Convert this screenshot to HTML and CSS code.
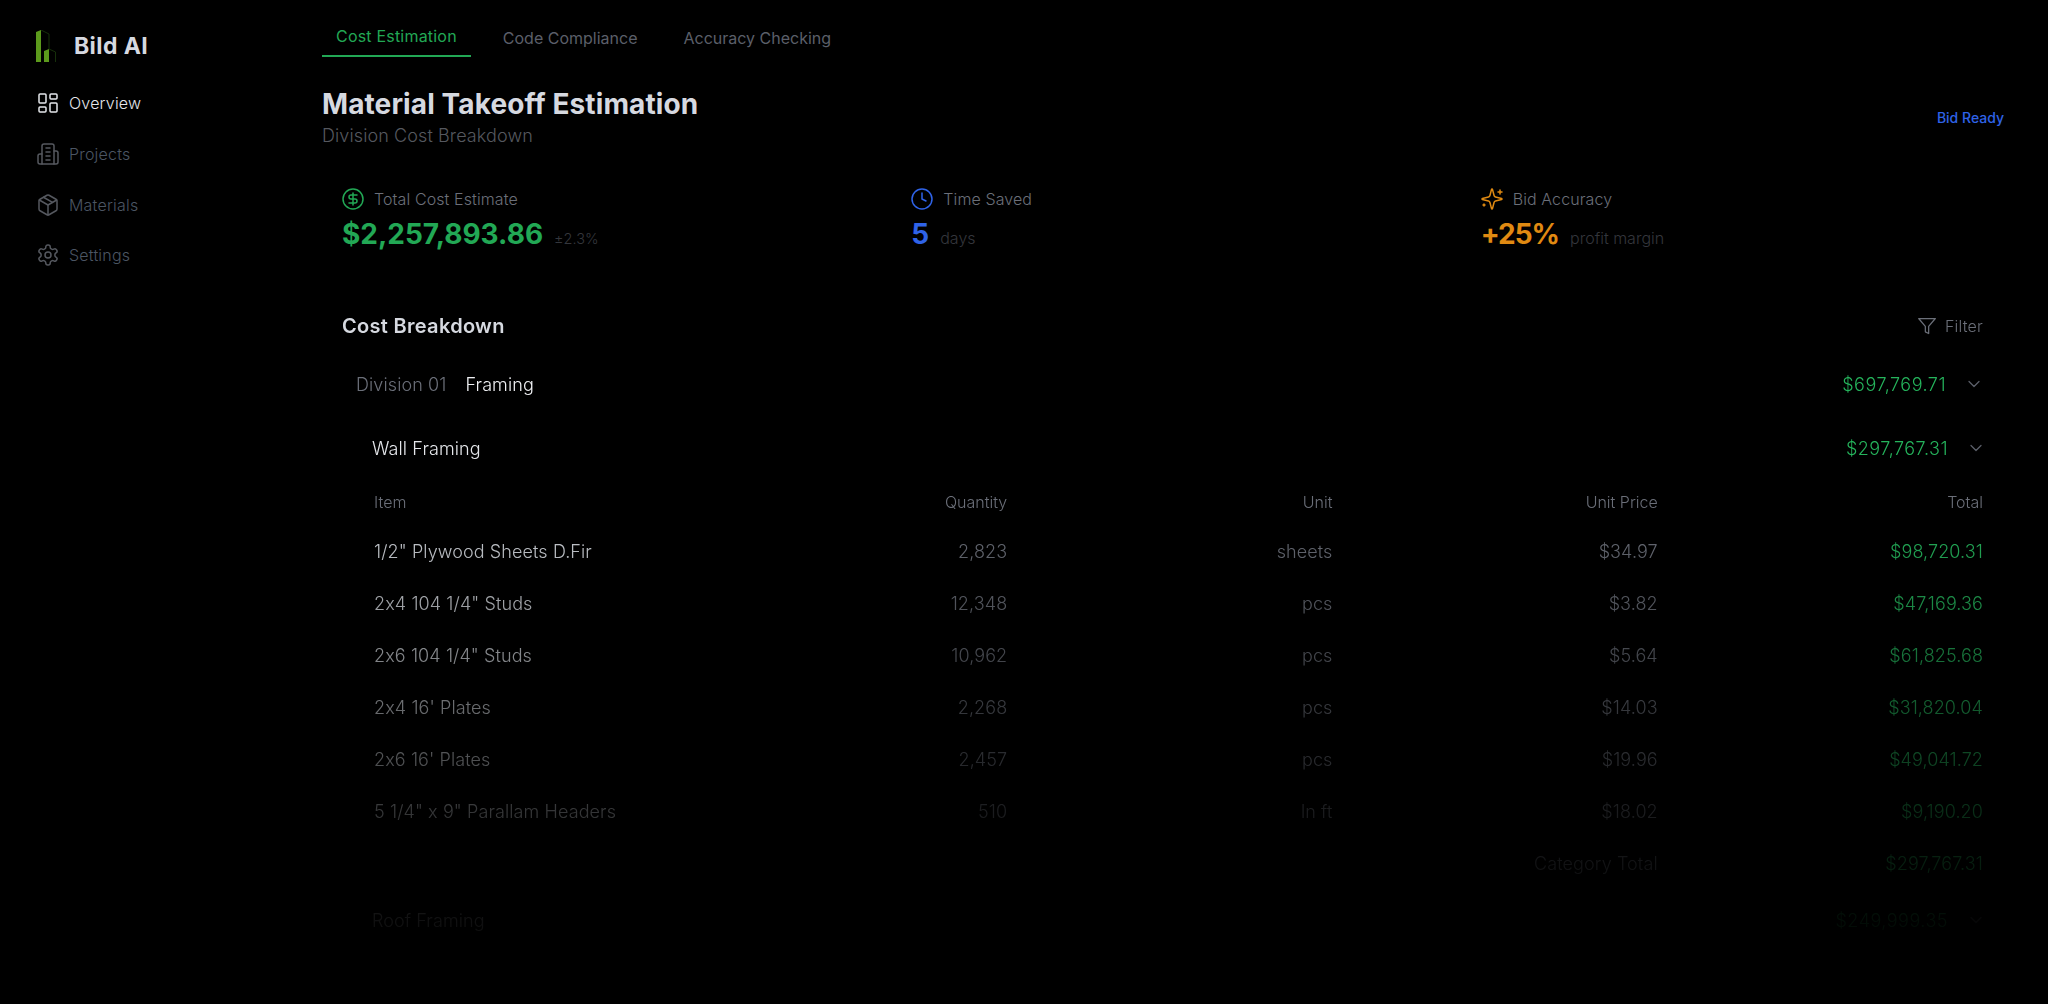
FILE: index.html
```html
<!DOCTYPE html>
<html lang="en">
<head>
    <meta charset="UTF-8">
    <meta name="viewport" content="width=device-width, initial-scale=1.0">
    <title>Bild AI</title>
    <link rel="stylesheet" href="styles.css">
</head>
<body>
    <div class="layout">
        <aside class="sidebar">
            <div class="brand">
                <svg class="logo" width="20" height="32" viewBox="0 0 20 32">
                    <polygon points="0,2 5,0 5,32 0,32" fill="#5c9a1c"/>
                    <polyline points="5,0 13,4 13,19" fill="none" stroke="#16300a" stroke-width="1"/>
                    <polygon points="8,21 13,19 13,32 8,32" fill="#5c9a1c"/>
                    <polyline points="13,19 19.5,22 19.5,32" fill="none" stroke="#16300a" stroke-width="1"/>
                </svg>
                <span class="brand-name">Bild AI</span>
            </div>
            <nav class="nav">
                <a class="nav-item active">
                    <svg class="icon" viewBox="0 0 24 24"><rect x="3" y="3" width="7" height="9" rx="1"/><rect x="14" y="3" width="7" height="5" rx="1"/><rect x="14" y="12" width="7" height="9" rx="1"/><rect x="3" y="16" width="7" height="5" rx="1"/></svg>
                    Overview
                </a>
                <a class="nav-item">
                    <svg class="icon" viewBox="0 0 24 24"><path d="M6 22V4a2 2 0 0 1 2-2h8a2 2 0 0 1 2 2v18Z"/><path d="M6 12H4a2 2 0 0 0-2 2v6a2 2 0 0 0 2 2h2"/><path d="M18 9h2a2 2 0 0 1 2 2v9a2 2 0 0 1-2 2h-2"/><path d="M10 6h4"/><path d="M10 10h4"/><path d="M10 14h4"/><path d="M10 18h4"/></svg>
                    Projects
                </a>
                <a class="nav-item">
                    <svg class="icon" viewBox="0 0 24 24"><path d="M11 21.73a2 2 0 0 0 2 0l7-4A2 2 0 0 0 21 16V8a2 2 0 0 0-1-1.73l-7-4a2 2 0 0 0-2 0l-7 4A2 2 0 0 0 3 8v8a2 2 0 0 0 1 1.73z"/><path d="M12 22V12"/><path d="m3.3 7 8.7 5 8.7-5"/><path d="m7.5 4.27 9 5.15"/></svg>
                    Materials
                </a>
                <a class="nav-item">
                    <svg class="icon" viewBox="0 0 24 24"><path d="M12.22 2h-.44a2 2 0 0 0-2 2v.18a2 2 0 0 1-1 1.73l-.43.25a2 2 0 0 1-2 0l-.15-.08a2 2 0 0 0-2.73.73l-.22.38a2 2 0 0 0 .73 2.73l.15.1a2 2 0 0 1 1 1.72v.51a2 2 0 0 1-1 1.74l-.15.09a2 2 0 0 0-.73 2.73l.22.38a2 2 0 0 0 2.73.73l.15-.08a2 2 0 0 1 2 0l.43.25a2 2 0 0 1 1 1.73V20a2 2 0 0 0 2 2h.44a2 2 0 0 0 2-2v-.18a2 2 0 0 1 1-1.73l.43-.25a2 2 0 0 1 2 0l.15.08a2 2 0 0 0 2.73-.73l.22-.39a2 2 0 0 0-.73-2.73l-.15-.08a2 2 0 0 1-1-1.74v-.5a2 2 0 0 1 1-1.74l.15-.09a2 2 0 0 0 .73-2.73l-.22-.38a2 2 0 0 0-2.73-.73l-.15.08a2 2 0 0 1-2 0l-.43-.25a2 2 0 0 1-1-1.73V4a2 2 0 0 0-2-2z"/><circle cx="12" cy="12" r="3"/></svg>
                    Settings
                </a>
            </nav>
        </aside>

        <main class="main">
            <div class="tabs">
                <a class="tab active">Cost Estimation</a>
                <a class="tab">Code Compliance</a>
                <a class="tab">Accuracy Checking</a>
            </div>

            <header class="page-head">
                <div>
                    <h1>Material Takeoff Estimation</h1>
                    <p class="subtitle">Division Cost Breakdown</p>
                </div>
                <span class="badge">Bid Ready</span>
            </header>

            <section class="stats">
                <div class="stat">
                    <div class="stat-label">
                        <svg class="icon green" viewBox="0 0 24 24"><circle cx="12" cy="12" r="10"/><path d="M16 8h-6a2 2 0 1 0 0 4h4a2 2 0 1 1 0 4H8"/><path d="M12 18V6"/></svg>
                        Total Cost Estimate
                    </div>
                    <div class="stat-value"><strong class="green">$2,257,893.86</strong><span class="delta">±2.3%</span></div>
                </div>
                <div class="stat">
                    <div class="stat-label">
                        <svg class="icon blue" viewBox="0 0 24 24"><circle cx="12" cy="12" r="10"/><polyline points="12 6 12 12 16 14"/></svg>
                        Time Saved
                    </div>
                    <div class="stat-value"><strong class="blue">5</strong><span>days</span></div>
                </div>
                <div class="stat">
                    <div class="stat-label">
                        <svg class="icon orange" viewBox="0 0 24 24"><path d="M9.937 15.5A2 2 0 0 0 8.5 14.063l-6.135-1.582a.5.5 0 0 1 0-.962L8.5 9.936A2 2 0 0 0 9.937 8.5l1.582-6.135a.5.5 0 0 1 .963 0L14.063 8.5A2 2 0 0 0 15.5 9.937l6.135 1.581a.5.5 0 0 1 0 .964L15.5 14.063a2 2 0 0 0-1.437 1.437l-1.582 6.135a.5.5 0 0 1-.963 0z"/><path d="M20 3v4"/><path d="M22 5h-4"/><path d="M4 17v2"/><path d="M5 18H3"/></svg>
                        Bid Accuracy
                    </div>
                    <div class="stat-value"><strong class="orange">+25%</strong><span>profit margin</span></div>
                </div>
            </section>

            <section class="breakdown">
                <div class="breakdown-head">
                    <h2>Cost Breakdown</h2>
                    <a class="filter">
                        <svg class="icon" viewBox="0 0 24 24"><polygon points="22 3 2 3 10 12.46 10 19 14 21 14 12.46 22 3"/></svg>
                        Filter
                    </a>
                </div>

                <div class="division">
                    <div><span class="muted">Division 01</span><span class="division-name">Framing</span></div>
                    <div class="amount">$697,769.71<svg class="chevron" viewBox="0 0 24 24"><path d="m6 9 6 6 6-6"/></svg></div>
                </div>

                <div class="category">
                    <span>Wall Framing</span>
                    <div class="amount">$297,767.31<svg class="chevron" viewBox="0 0 24 24"><path d="m6 9 6 6 6-6"/></svg></div>
                </div>

                <table class="items">
                    <thead>
                        <tr><th>Item</th><th>Quantity</th><th>Unit</th><th>Unit Price</th><th>Total</th></tr>
                    </thead>
                    <tbody>
                        <tr><td>1/2" Plywood Sheets D.Fir</td><td>2,823</td><td>sheets</td><td>$34.97</td><td>$98,720.31</td></tr>
                        <tr><td>2x4 104 1/4" Studs</td><td>12,348</td><td>pcs</td><td>$3.82</td><td>$47,169.36</td></tr>
                        <tr><td>2x6 104 1/4" Studs</td><td>10,962</td><td>pcs</td><td>$5.64</td><td>$61,825.68</td></tr>
                        <tr><td>2x4 16' Plates</td><td>2,268</td><td>pcs</td><td>$14.03</td><td>$31,820.04</td></tr>
                        <tr><td>2x6 16' Plates</td><td>2,457</td><td>pcs</td><td>$19.96</td><td>$49,041.72</td></tr>
                        <tr><td>5 1/4" x 9" Parallam Headers</td><td>510</td><td>ln ft</td><td>$18.02</td><td>$9,190.20</td></tr>
                        <tr><td></td><td></td><td></td><td>Category Total</td><td>$297,767.31</td></tr>
                    </tbody>
                </table>

                <div class="category next">
                    <span>Roof Framing</span>
                    <div class="amount">$249,999.35<svg class="chevron" viewBox="0 0 24 24"><path d="m6 9 6 6 6-6"/></svg></div>
                </div>
            </section>
        </main>
    </div>
</body>
</html>
```

FILE: styles.css
```css
* {
    box-sizing: border-box;
}
body {
    margin: 0;
    background-color: #000;
    color: #d1d5db;
    font-family: Inter, "Liberation Sans", sans-serif;
    font-feature-settings: "calt" 0;
    overflow: hidden;
}
h1, h2, p {
    margin: 0;
}
.layout {
    display: flex;
    height: 1004px;
}
.icon {
    width: 24px;
    height: 24px;
    flex: none;
    fill: none;
    stroke: currentColor;
    stroke-width: 1.5;
    stroke-linecap: round;
    stroke-linejoin: round;
}
.green {
    color: #22a855;
}
.blue {
    color: #2f63e8;
}
.orange {
    color: #e08a12;
}

/* sidebar */
.sidebar {
    width: 322px;
    flex: none;
    padding: 30px 0 0 36px;
}
.brand {
    display: flex;
    align-items: center;
    gap: 18px;
    height: 32px;
}
.brand-name {
    font-size: 23px;
    font-weight: 700;
    letter-spacing: 0.4px;
    color: #d6d9e0;
}
.nav {
    margin-top: 16px;
}
.nav-item {
    display: flex;
    align-items: center;
    gap: 9px;
    height: 50.67px;
    font-size: 16px;
    font-weight: 300;
    letter-spacing: 0.2px;
    color: #4b5563;
}
.nav-item .icon {
    color: #55585f;
}
.nav-item.active, .nav-item.active .icon {
    color: #e5e7eb;
}

/* main column */
.main {
    flex: 1;
    min-width: 0;
    padding-right: 44px;
}
.tabs {
    display: flex;
    align-items: flex-start;
    gap: 18px;
    height: 76px;
    padding-top: 20px;
}
.tab {
    padding: 0 14px;
    height: 37px;
    line-height: 36px;
    font-size: 16px;
    color: #5b5f69;
}
.tab.active {
    color: #22a855;
    border-bottom: 2px solid #22a855;
    line-height: 33px;
    letter-spacing: 0.2px;
}
.page-head {
    display: flex;
    justify-content: space-between;
    align-items: center;
    padding-top: 10px;
}
h1 {
    font-size: 28px;
    font-weight: 700;
    line-height: 36px;
    letter-spacing: 0.1px;
    color: #d6d9e0;
}
.subtitle {
    margin-top: 1px;
    font-size: 18px;
    font-weight: 300;
    line-height: 26px;
    letter-spacing: 0.1px;
    color: #55585f;
}
.badge {
    font-size: 14px;
    font-weight: 500;
    color: #2f63e8;
}
.stats {
    display: grid;
    grid-template-columns: repeat(3, 1fr);
    gap: 26px;
    margin-top: 38px;
}
.stat {
    padding-left: 20px;
}
.stat-label {
    display: flex;
    align-items: center;
    gap: 9px;
    margin-left: -1px;
    font-size: 16px;
    font-weight: 300;
    letter-spacing: 0.1px;
    color: #6b6f79;
}
.stat-value {
    display: flex;
    align-items: baseline;
    gap: 11px;
    margin-top: 6px;
}
.stat-value strong {
    font-size: 28px;
    font-weight: 700;
}
.stat-value strong.orange {
    letter-spacing: -1px;
}
.stat-value span {
    font-size: 16px;
    font-weight: 300;
    color: #34363c;
}
.stat-value .delta {
    font-size: 14.5px;
}

/* cost table */
.breakdown {
    margin-top: 60px;
    padding: 0 21px 0 20px;
    -webkit-mask-image: linear-gradient(#000 190px, rgba(0, 0, 0, 0.5) 397px, rgba(0, 0, 0, 0.25) 501px, rgba(0, 0, 0, 0.07) 610px, transparent 690px);
    mask-image: linear-gradient(#000 190px, rgba(0, 0, 0, 0.5) 397px, rgba(0, 0, 0, 0.25) 501px, rgba(0, 0, 0, 0.07) 610px, transparent 690px);
}
.breakdown-head {
    display: flex;
    justify-content: space-between;
    align-items: center;
    height: 30px;
}
h2 {
    font-size: 20px;
    font-weight: 600;
    letter-spacing: 0.3px;
    color: #d6d9e0;
}
.filter {
    display: flex;
    align-items: center;
    gap: 8px;
    font-size: 16px;
    font-weight: 300;
    letter-spacing: 0.2px;
    color: #6b6f79;
}
.filter .icon {
    width: 20px;
    height: 20px;
}
.division, .category {
    display: flex;
    justify-content: space-between;
    align-items: center;
    font-size: 18px;
    font-weight: 300;
    letter-spacing: 0.1px;
}
.division {
    padding-left: 14px;
    margin-top: 28px;
    height: 30px;
}
.muted {
    color: #6b6f79;
}
.division-name {
    margin-left: 19px;
    color: #f0f1f4;
}
.category {
    padding-left: 30px;
    margin-top: 34px;
    height: 30px;
    color: #e5e7eb;
}
.amount {
    display: flex;
    align-items: center;
    gap: 18px;
    letter-spacing: 0.5px;
    color: #25b45c;
}
.chevron {
    width: 20px;
    height: 20px;
    margin-right: -1px;
    fill: none;
    stroke: #5b5f69;
    stroke-width: 1.5;
    stroke-linecap: round;
    stroke-linejoin: round;
}
.category .chevron {
    margin-right: -3px;
}
.items {
    width: calc(100% - 32px);
    margin: 16px 0 0 32px;
    border-collapse: collapse;
    table-layout: fixed;
}
.items th {
    height: 46px;
    padding: 0;
    font-size: 16px;
    font-weight: 300;
    text-align: right;
    color: #6b6f79;
}
.items td {
    height: 52px;
    padding: 0;
    font-size: 18px;
    font-weight: 300;
    letter-spacing: 0.1px;
    text-align: right;
    color: #6b6f79;
}
.items th:first-child {
    width: 308px;
    text-align: left;
}
.items td:first-child {
    text-align: left;
    white-space: nowrap;
    color: #d1d5db;
}
.items td:last-child {
    color: #25b45c;
}
.category.next {
    margin-top: 16px;
}
```
